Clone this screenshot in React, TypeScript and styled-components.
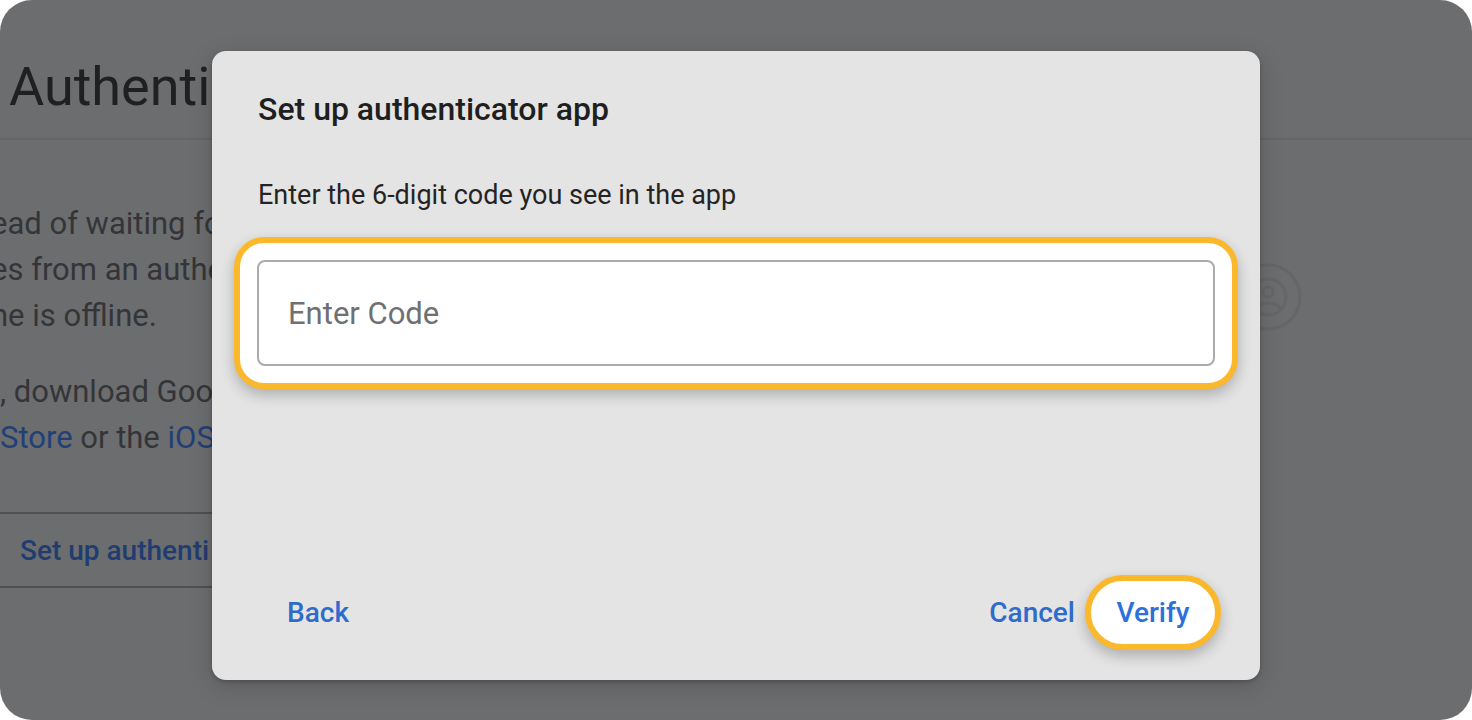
import React from "react";
import styled, { createGlobalStyle } from "styled-components";

const GlobalStyle = createGlobalStyle`
  * { box-sizing: border-box; }
  body {
    margin: 0;
    background: #ffffff;
    font-family: Roboto, "Liberation Sans", sans-serif;
  }
  h1, h2, p { margin: 0; font-weight: 400; }
  button, input { font-family: inherit; }
`;

const Screen = styled.div`
  position: relative;
  min-height: 100vh;
  overflow: hidden;
  border-radius: 32px;
  background: #6c6d6f;
`;

const Header = styled.header`
  height: 140px;
  padding: 57px 0 0 9px;
  border-bottom: 2px solid #646567;
`;

const PageTitle = styled.h1`
  font-size: 54px;
  line-height: 60px;
  color: #1f2022;
  white-space: nowrap;
`;

const Content = styled.main`
  display: flex;
  justify-content: space-between;
  padding: 61px 168px 0 0;
`;

const Copy = styled.div`
  display: flex;
  flex-direction: column;
  gap: 30px;
  width: 220px;
`;

const Paragraph = styled.p<{ $scrolled?: boolean }>`
  margin-left: ${(p) => (p.$scrolled ? "-9px" : "0")};
  font-size: 31px;
  line-height: 46px;
  color: #343538;
  white-space: nowrap;
`;

const StoreLink = styled.a`
  color: #223f76;
  text-decoration: none;
`;

const SetupButton = styled.button`
  height: 76px;
  margin-top: 21px;
  padding: 0 0 0 20px;
  border: solid #4f5052;
  border-width: 2px 0;
  background: none;
  color: #213c70;
  font-size: 28px;
  font-weight: 500;
  text-align: left;
  white-space: nowrap;
`;

const Badge = styled.svg`
  flex: none;
  width: 70px;
  height: 70px;
  margin-top: 61px;
`;

const Overlay = styled.div`
  position: absolute;
  inset: 0;
  display: flex;
  padding: 51px 212px 40px;
`;

const Dialog = styled.section`
  flex: 1;
  min-width: 0;
  display: flex;
  flex-direction: column;
  padding: 36px 22px 30px;
  border-radius: 14px;
  background: #e4e4e4;
  box-shadow: 0 2px 4px rgba(0, 0, 0, 0.2), 0 6px 24px rgba(0, 0, 0, 0.16);
`;

const DialogTitle = styled.h2`
  padding: 0 24px;
  font-size: 32px;
  line-height: 44px;
  font-weight: 500;
  color: #1f1f1f;
`;

const Hint = styled.label`
  margin-top: 46px;
  padding: 0 24px;
  font-size: 27px;
  line-height: 36px;
  color: #242424;
`;

const FieldHighlight = styled.div`
  margin-top: 24px;
  padding: 17px;
  border: 6px solid #fbb82c;
  border-radius: 30px;
  background: #ffffff;
  box-shadow: 0 6px 14px rgba(0, 0, 0, 0.24);
`;

const CodeInput = styled.input`
  display: block;
  width: 100%;
  height: 106px;
  padding: 0 29px;
  border: 2px solid #ababab;
  border-radius: 8px;
  background: #ffffff;
  color: #1f1f1f;
  font-size: 31px;
  &::placeholder {
    color: #6f7072;
    opacity: 1;
  }
`;

const Actions = styled.footer`
  display: flex;
  align-items: center;
  margin-top: auto;
  padding: 0 17px 0 43px;
`;

const TextButton = styled.button<{ $push?: boolean }>`
  padding: 8px 10px;
  border: 0;
  background: none;
  color: #2f6bcb;
  font-size: 28px;
  line-height: 32px;
  font-weight: 500;
  margin-left: ${(p) => (p.$push ? "auto" : "0")};
`;

const VerifyButton = styled(TextButton)`
  width: 136px;
  height: 75px;
  border: 6px solid #fbb82c;
  border-radius: 38px;
  background: #ffffff;
  color: #2b70dc;
  box-shadow: 0 6px 14px rgba(0, 0, 0, 0.24);
`;

export default function App() {
  return (
    <>
      <GlobalStyle />
      <Screen>
        <Header>
          <PageTitle>Authenti</PageTitle>
        </Header>
        <Content>
          <Copy>
            <Paragraph $scrolled>
              ead of waiting fo
              <br />
              es from an authe
              <br />
              ne is offline.
            </Paragraph>
            <Paragraph>
              , download Goo
              <br />
              <StoreLink href="#store">Store</StoreLink> or the{" "}
              <StoreLink href="#ios">iOS</StoreLink>
            </Paragraph>
            <SetupButton type="button">Set up authenti</SetupButton>
          </Copy>
          <Badge viewBox="0 0 70 70" fill="none" stroke="#656668" strokeWidth="3" aria-hidden="true">
            <circle cx="34" cy="35" r="32" />
            <circle cx="34" cy="35" r="18" />
            <circle cx="34" cy="30" r="5" />
            <path d="M21 47c4-5 8-6 13-6s9 1 13 6" />
          </Badge>
        </Content>
        <Overlay>
          <Dialog role="dialog" aria-labelledby="setup-title">
            <DialogTitle id="setup-title">Set up authenticator app</DialogTitle>
            <Hint htmlFor="code">Enter the 6-digit code you see in the app</Hint>
            <FieldHighlight>
              <CodeInput id="code" placeholder="Enter Code" />
            </FieldHighlight>
            <Actions>
              <TextButton type="button">Back</TextButton>
              <TextButton type="button" $push>
                Cancel
              </TextButton>
              <VerifyButton type="button">Verify</VerifyButton>
            </Actions>
          </Dialog>
        </Overlay>
      </Screen>
    </>
  );
}
